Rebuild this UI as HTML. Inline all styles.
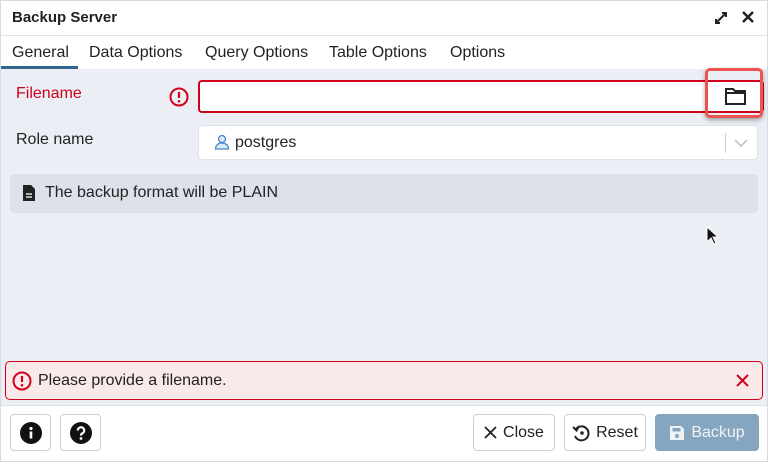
<!DOCTYPE html>
<html><head><style>
*{box-sizing:border-box;margin:0;padding:0}
body{width:768px;height:462px;overflow:hidden;font-family:"Liberation Sans",sans-serif;background:#fff;position:relative;color:#222}
.a{position:absolute}
.t{font-size:16px;letter-spacing:0}
.btn{position:absolute;top:414px;height:37px;border:1px solid #c9cfd8;border-radius:4px;background:#fff;display:flex;align-items:center;justify-content:center;font-size:16px;color:#222;gap:6px}
</style></head><body>
<div class="a" style="left:0;top:0;width:768px;height:462px;border:1px solid #d6dbe3"></div>
<div class="a" style="left:12px;top:9px;font-size:15px;font-weight:bold;color:#222">Backup Server</div>
<svg class="a" style="left:714px;top:11px" width="14" height="14" viewBox="0 0 14 14"><path d="M2 12L12 2M8 2h4v4M2 8v4h4" stroke="#222" stroke-width="2" fill="none"/></svg>
<svg class="a" style="left:742px;top:11px" width="12" height="12" viewBox="0 0 12 12"><path d="M1 1L11 11M11 1L1 11" stroke="#222" stroke-width="2.5"/></svg>
<div class="a" style="left:0;top:35px;width:768px;height:1px;background:#dde2ea"></div>
<div class="a t" style="left:12px;top:44px;color:#222">General</div>
<div class="a t" style="left:89px;top:44px">Data Options</div>
<div class="a t" style="left:205px;top:44px">Query Options</div>
<div class="a t" style="left:329px;top:44px">Table Options</div>
<div class="a t" style="left:450px;top:44px">Options</div>
<div class="a" style="left:1px;top:66px;width:77px;height:3px;background:#326690"></div>
<div class="a" style="left:1px;top:69px;width:766px;height:336px;background:#ebeef5"></div>
<div class="a t" style="left:16px;top:85px;color:#d0021b">Filename</div>
<svg class="a" style="left:169px;top:87px" width="20" height="20" viewBox="0 0 20 20"><circle cx="10" cy="10" r="8.5" stroke="#d0021b" stroke-width="2" fill="none"/><path d="M10 5v6" stroke="#d0021b" stroke-width="2.2"/><circle cx="10" cy="14.3" r="1.3" fill="#d0021b"/></svg>
<div class="a" style="left:198px;top:80px;width:566px;height:33px;background:#fff;border:2px solid #d0021b;border-radius:4px"></div>
<div class="a" style="left:705px;top:68px;width:58px;height:50px;border:3px solid #ef5350;border-radius:5px;box-shadow:0 2px 5px rgba(0,0,0,.35)"></div>
<svg class="a" style="left:724px;top:86px" width="23" height="20" viewBox="0 0 23 20"><path d="M2 3h7l2 2h10v13H2z M2 7h19" stroke="#222" stroke-width="2" fill="none"/></svg>
<div class="a t" style="left:16px;top:131px">Role name</div>
<div class="a" style="left:198px;top:125px;width:560px;height:35px;background:#fff;border:1px solid #dde2ea;border-radius:4px"></div>
<svg class="a" style="left:214px;top:134px" width="16" height="16" viewBox="0 0 16 16"><circle cx="8" cy="5" r="3.5" stroke="#4a86c8" stroke-width="1.3" fill="#dbe8f6"/><path d="M1.5 15c0-4 3-6 6.5-6s6.5 2 6.5 6z" stroke="#4a86c8" stroke-width="1.3" fill="#dbe8f6"/></svg>
<div class="a t" style="left:235px;top:134px">postgres</div>
<div class="a" style="left:725px;top:133px;width:1px;height:20px;background:#ccc"></div>
<svg class="a" style="left:734px;top:139px" width="14" height="8" viewBox="0 0 14 8"><path d="M1 1l6 6 6-6" stroke="#bbb" stroke-width="1.5" fill="none"/></svg>
<div class="a" style="left:10px;top:174px;width:748px;height:39px;background:#dde1e9;border-radius:4px"></div>
<svg class="a" style="left:22px;top:184px" width="14" height="18" viewBox="0 0 14 18"><path d="M1 1h8l4 4v12H1z" fill="#222"/><path d="M4 10h6M4 13h6" stroke="#dde1e9" stroke-width="1.5"/></svg>
<div class="a t" style="left:45px;top:184px">The backup format will be PLAIN</div>
<svg class="a" style="left:706px;top:226px" width="14" height="20" viewBox="0 0 14 20"><path d="M1 1v15l4-4 3 6 2-1-3-6h5z" fill="#111" stroke="#fff" stroke-width="1"/></svg>
<div class="a" style="left:5px;top:361px;width:758px;height:39px;background:#fae9ea;border:1px solid #d0021b;border-radius:5px"></div>
<svg class="a" style="left:12px;top:371px" width="20" height="20" viewBox="0 0 20 20"><circle cx="10" cy="10" r="8.5" stroke="#d0021b" stroke-width="2" fill="none"/><path d="M10 5v6" stroke="#d0021b" stroke-width="2.2"/><circle cx="10" cy="14.3" r="1.3" fill="#d0021b"/></svg>
<div class="a t" style="left:38px;top:372px">Please provide a filename.</div>
<svg class="a" style="left:736px;top:374px" width="13" height="13" viewBox="0 0 13 13"><path d="M1 1L12 12M12 1L1 12" stroke="#d0021b" stroke-width="2"/></svg>
<div class="a" style="left:1px;top:405px;width:766px;height:1px;background:#dde2ea"></div>
<div class="btn" style="left:10px;width:41px"><svg width="22" height="22" viewBox="0 0 22 22"><circle cx="11" cy="11" r="11" fill="#111"/><circle cx="11" cy="6.5" r="1.6" fill="#fff"/><path d="M11 9.5v7" stroke="#fff" stroke-width="2.6"/></svg></div>
<div class="btn" style="left:60px;width:41px"><svg width="22" height="22" viewBox="0 0 22 22"><circle cx="11" cy="11" r="11" fill="#111"/><path d="M7.8 8.5a3.2 3.2 0 1 1 4.5 2.9c-1 .5-1.3 1-1.3 2.2" stroke="#fff" stroke-width="2.2" fill="none"/><circle cx="11" cy="16.5" r="1.4" fill="#fff"/></svg></div>
<div class="btn" style="left:473px;width:82px"><svg width="13" height="13" viewBox="0 0 13 13"><path d="M1 1L12 12M12 1L1 12" stroke="#222" stroke-width="1.8"/></svg>Close</div>
<div class="btn" style="left:564px;width:82px"><svg width="18" height="18" viewBox="0 0 18 18"><path d="M4 5A7 7 0 1 1 3 12" stroke="#222" stroke-width="2" fill="none"/><path d="M1 3l3.5 3.5L7 2" stroke="#222" stroke-width="2" fill="none"/><circle cx="10" cy="9" r="1.8" fill="#222"/></svg>Reset</div>
<div class="btn" style="left:655px;width:104px;background:#86a6c0;border-color:#86a6c0;color:#eef3f8"><svg width="16" height="16" viewBox="0 0 16 16"><path d="M1 1h11l3 3v11H1z" fill="#eef3f8"/><rect x="3.5" y="3" width="8" height="3.5" fill="#86a6c0"/><circle cx="8" cy="11" r="2" fill="#86a6c0"/></svg>Backup</div>
</body></html>
